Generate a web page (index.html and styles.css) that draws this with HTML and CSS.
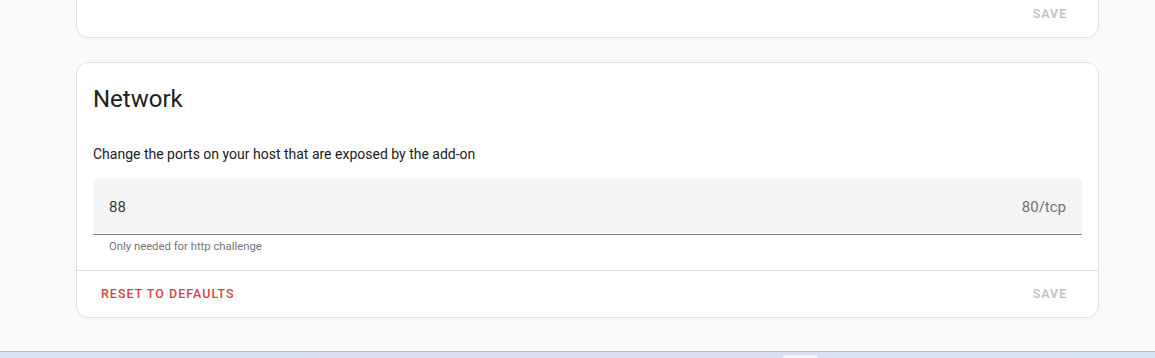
FILE: index.html
```html
<!DOCTYPE html>
<html>
  <head lang="en">
    <meta charset="UTF-8" />
    <title>Network</title>
    <link rel="stylesheet" href="styles.css">
  </head>

  <body>
    <div class="page">
      <div class="card card-prev">
        <div class="card-actions">
          <span class="spacer"></span>
          <a class="btn btn-disabled" href="javascript:void(0);">Save</a>
        </div>
      </div>

      <div class="card">
        <h1 class="card-header">Network</h1>
        <div class="card-content">
          <div class="description">Change the ports on your host that are exposed by the add-on</div>
          <div class="text-field">
            <span class="field-value">88</span>
            <span class="field-suffix">80/tcp</span>
          </div>
          <div class="helper-text">Only needed for http challenge</div>
        </div>
        <div class="card-actions">
          <a class="btn btn-warning" href="javascript:void(0);">Reset to defaults</a>
          <span class="spacer"></span>
          <a class="btn btn-disabled" href="javascript:void(0);">Save</a>
        </div>
      </div>
    </div>
    <div class="taskbar">
      <span class="taskbar-item"></span>
    </div>
  </body>
</html>
```

FILE: styles.css
```css
html,
body {
  margin: 0px;
  padding: 0px;
  height: 358px;
  overflow: hidden;
}

body {
  display: flex;
  flex-direction: column;
  background: #fafafa;
  font-family: Roboto, "Noto Sans", sans-serif;
  color: #212121;
}

a {
  text-decoration: none;
}

.page {
  flex: 1;
  overflow: hidden;
  padding: 0px 56px 0px 76px;
}

.card {
  background: #ffffff;
  border: 1px solid #e0e0e0;
  border-radius: 12px;
  margin-bottom: 24px;
}

.card-prev {
  margin-top: -10px;
}

.card-header {
  margin: 0px;
  padding: 12px 16px 16px 16px;
  font-size: 24px;
  font-weight: 400;
  line-height: 48px;
  color: #212121;
}

.card-content {
  padding: 0px 16px 15px 16px;
}

.description {
  font-size: 14px;
  line-height: 20px;
  margin: 5px 0px 15px 0px;
}

.text-field {
  display: flex;
  align-items: center;
  height: 55px;
  background: #f5f5f5;
  border-radius: 4px 4px 0px 0px;
  border-bottom: 1px solid #8a8a8a;
  padding: 0px 16px;
  font-size: 15px;
}

.field-value {
  flex: 1;
  color: #3a3a3a;
}

.field-suffix {
  color: #727272;
}

.helper-text {
  font-size: 11.3px;
  line-height: 16px;
  color: #757575;
  padding: 4px 16px 0px 16px;
}

.card-actions {
  display: flex;
  align-items: center;
  border-top: 1px solid #e0e0e0;
  padding: 5px 16px;
}

.card-prev .card-actions {
  border-top: none;
}

.spacer {
  flex: 1;
}

.btn {
  display: block;
  min-width: 64px;
  box-sizing: border-box;
  height: 36px;
  line-height: 36px;
  padding: 0px 8px;
  text-align: center;
  font-size: 12.5px;
  font-weight: 500;
  letter-spacing: 1px;
  text-transform: uppercase;
}

.btn-warning {
  color: #db4437;
}

.btn-disabled {
  color: #bdbdbd;
}

.taskbar {
  height: 6px;
  border-top: 1px solid #b3bbca;
  background: linear-gradient(90deg, #d8e1f3, #dcdcef 50%, #d8e4f6);
  position: relative;
}

.taskbar-item {
  position: absolute;
  left: 783px;
  top: 3px;
  width: 35px;
  height: 6px;
  background: #f2f5fb;
  border-radius: 3px 3px 0px 0px;
}
```
